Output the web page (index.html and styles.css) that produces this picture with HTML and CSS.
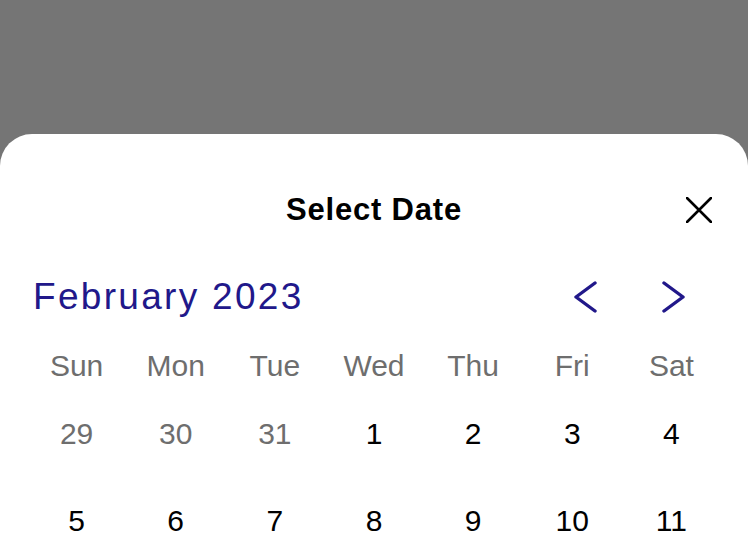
FILE: index.html
```html
<!DOCTYPE html>
<html lang="en">
<head>
  <meta charset="UTF-8" />
  <title>Select Date</title>
  <meta name="viewport" content="width=device-width, initial-scale=1.0" />
  <link rel="stylesheet" href="styles.css">
</head>
<body>

<div class="overlay">
  <div class="sheet">
    <div class="sheet-header">
      <span></span>
      <h1 class="sheet-title">Select Date</h1>
      <button class="close-btn" aria-label="Close">
        <svg width="26" height="26" viewBox="0 0 26 26">
          <path d="M1 1 L25 25 M25 1 L1 25" stroke="#000" stroke-width="2.6" stroke-linecap="round" fill="none" />
        </svg>
      </button>
    </div>

    <div class="month-bar">
      <div class="month-title">February 2023</div>
      <div class="month-nav">
        <button class="nav-btn" aria-label="Previous month">
          <svg width="26" height="32" viewBox="0 0 26 32">
            <path d="M23 2 L4 16 L23 30" stroke="currentColor" stroke-width="3.4" stroke-linecap="round" stroke-linejoin="round" fill="none" />
          </svg>
        </button>
        <button class="nav-btn" aria-label="Next month">
          <svg width="26" height="32" viewBox="0 0 26 32">
            <path d="M3 2 L22 16 L3 30" stroke="currentColor" stroke-width="3.4" stroke-linecap="round" stroke-linejoin="round" fill="none" />
          </svg>
        </button>
      </div>
    </div>

    <div class="weekdays">
      <span>Sun</span><span>Mon</span><span>Tue</span><span>Wed</span><span>Thu</span><span>Fri</span><span>Sat</span>
    </div>

    <div class="days">
      <span class="day muted">29</span>
      <span class="day muted">30</span>
      <span class="day muted">31</span>
      <span class="day">1</span>
      <span class="day">2</span>
      <span class="day">3</span>
      <span class="day">4</span>
      <span class="day">5</span>
      <span class="day">6</span>
      <span class="day">7</span>
      <span class="day">8</span>
      <span class="day">9</span>
      <span class="day">10</span>
      <span class="day">11</span>
    </div>
  </div>
</div>

</body>
</html>
```

FILE: styles.css
```css
:root {
  --overlay: #757575;
  --accent: #21188a;
  --muted: #6e6e6e;
}

html, body {
  height: 100%;
}

body {
  margin: 0;
  overflow: hidden;
  font-family: "Liberation Sans", Arial, sans-serif;
  background: var(--overlay);
  color: #000;
}

.overlay {
  height: 100%;
  padding-top: 134px;
  box-sizing: border-box;
  display: flex;
  flex-direction: column;
}

.sheet {
  flex: 1;
  background: #fff;
  border-radius: 32px 32px 0 0;
  padding-top: 48px;
  overflow: hidden;
}

.sheet-header {
  display: grid;
  grid-template-columns: 1fr auto 1fr;
  align-items: center;
  height: 56px;
  padding-right: 36px;
}

.sheet-title {
  margin: 0;
  font-size: 31px;
  font-weight: bold;
  letter-spacing: 0.8px;
  line-height: 56px;
  padding-left: 36px;
}

.close-btn {
  justify-self: end;
  background: none;
  border: none;
  padding: 0;
  width: 26px;
  height: 26px;
  cursor: pointer;
}

.close-btn svg {
  display: block;
}

.month-bar {
  display: flex;
  justify-content: space-between;
  align-items: center;
  height: 50px;
  margin-top: 34px;
  padding: 0 49px 0 33px;
}

.month-title {
  font-size: 37px;
  letter-spacing: 2.3px;
  line-height: 50px;
  color: var(--accent);
}

.month-nav {
  display: flex;
  gap: 39px;
}

.nav-btn {
  width: 50px;
  height: 50px;
  background: none;
  border: none;
  padding: 0;
  color: var(--accent);
  display: flex;
  align-items: center;
  justify-content: center;
  cursor: pointer;
}

.weekdays, .days {
  display: grid;
  grid-template-columns: repeat(7, 1fr);
  padding: 0 27px;
  text-align: center;
  font-size: 30px;
}

.weekdays {
  margin-top: 20px;
  height: 48px;
  line-height: 48px;
  color: var(--muted);
}

.days {
  margin-top: 20px;
  grid-auto-rows: 48px;
  row-gap: 39px;
}

.day {
  display: flex;
  align-items: center;
  justify-content: center;
}

.day.muted {
  color: var(--muted);
}
```
